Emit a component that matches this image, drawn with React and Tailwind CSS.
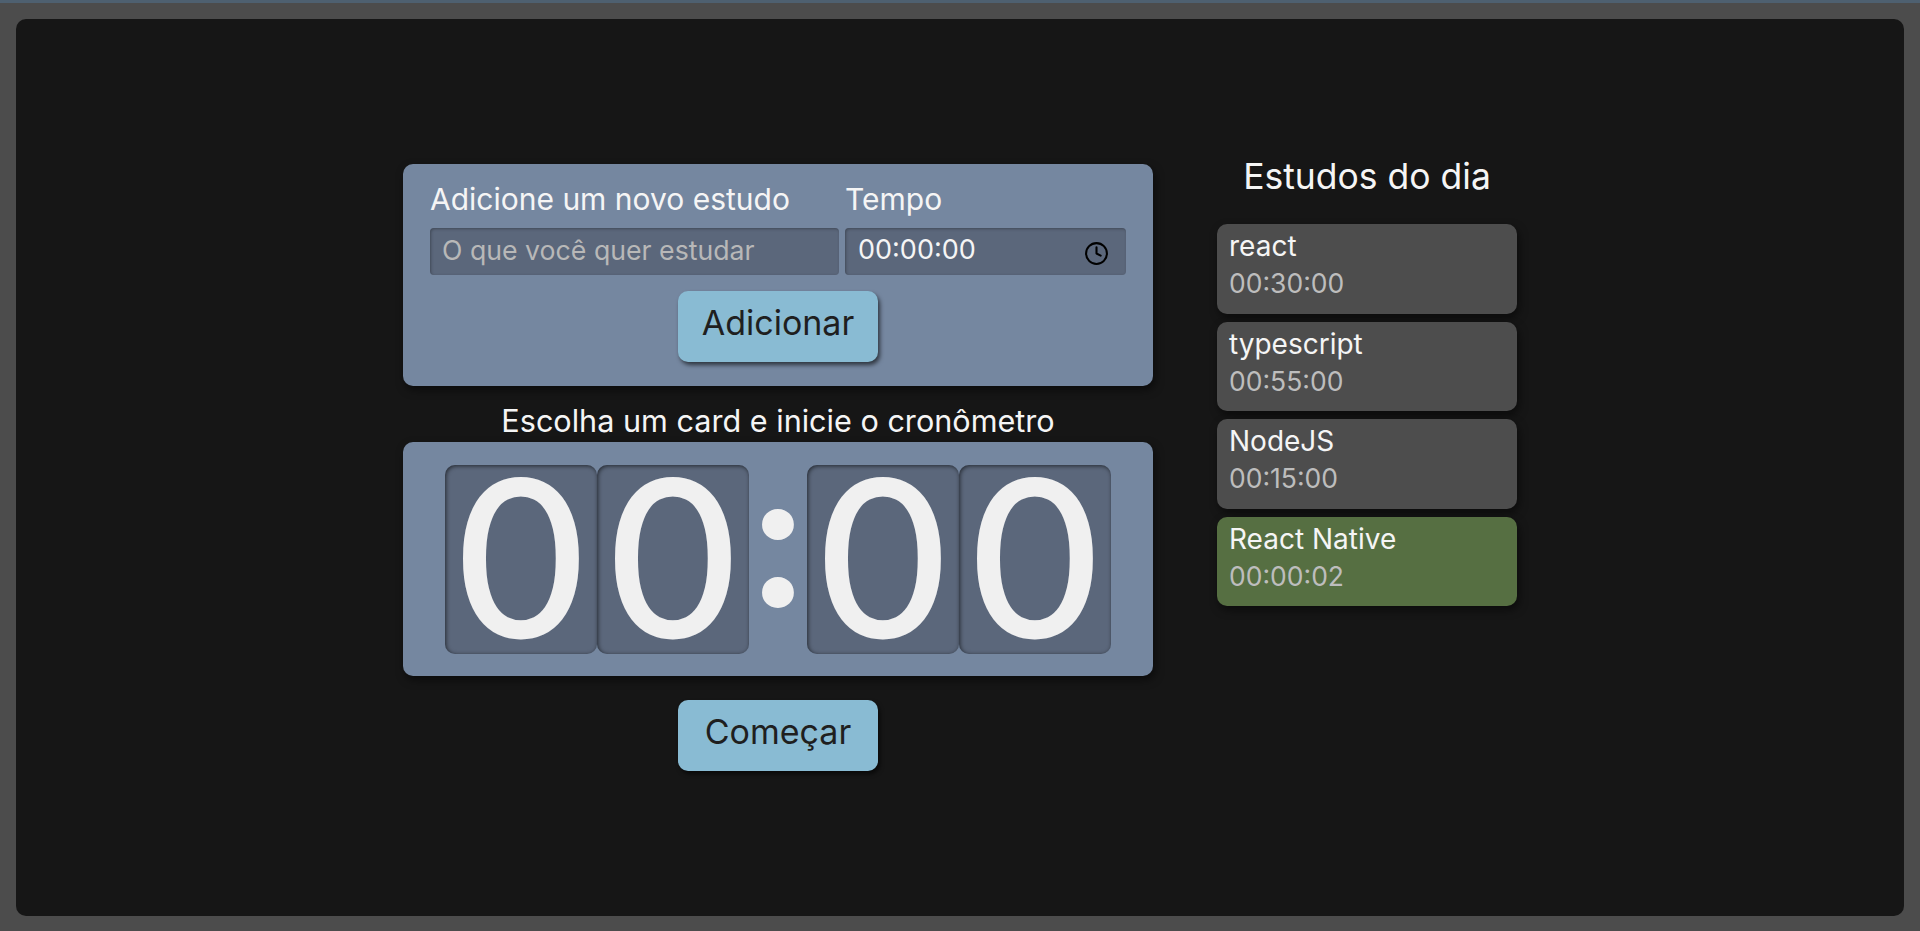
import React from 'react';
import { Clock } from 'lucide-react';

const studies = [
    { name: 'react', time: '00:30:00' },
    { name: 'typescript', time: '00:55:00' },
    { name: 'NodeJS', time: '00:15:00' },
    { name: 'React Native', time: '00:00:02', active: true },
];

function Digit({ value }) {
    return (
        <span className="w-[152px] h-[189px] flex items-center justify-center bg-[#5b677b] rounded-[10px] shadow-[inset_1px_1px_4px_rgba(0,0,0,0.6)] font-['Lato',sans-serif] text-[217px] leading-none pb-[14px] text-[#f0f0f0] [-webkit-text-stroke:3px_#f0f0f0]">
            {value}
        </span>
    );
}

function App() {
    return (
        <div className="h-[931px] bg-[#4c4c4c] border-t-[3px] border-[#4e6070] pt-4 pb-[15px] px-4 font-['Inter',sans-serif]">
            <div className="h-full bg-[#161616] rounded-[10px] flex justify-center gap-16 pt-[145px]">
                <div className="w-[750px] flex flex-col items-center">
                    <form className="w-full h-[222px] bg-[#7587a0] rounded-[10px] shadow-[2px_4px_8px_rgba(0,0,0,0.5)] pt-[17px] px-[27px]">
                        <div className="flex gap-[6px]">
                            <div className="w-[409px] flex flex-col">
                                <label className="text-[30px] leading-[36px] text-[#f5f5f5] pb-[11px]">Adicione um novo estudo</label>
                                <input
                                    placeholder="O que você quer estudar"
                                    className="h-[47px] bg-[#5b677b] rounded-[4px] px-3 pb-[3px] text-[26.7px] text-[#f5f5f5] placeholder:text-[#b8b8b8] shadow-[inset_1px_1px_3px_rgba(0,0,0,0.3)] outline-none"
                                />
                            </div>
                            <div className="w-[281px] flex flex-col">
                                <label className="text-[30px] leading-[36px] text-[#f5f5f5] pb-[11px]">Tempo</label>
                                <div className="h-[47px] bg-[#5b677b] rounded-[4px] pl-[13px] pr-[17px] pb-[2px] flex items-center justify-between shadow-[inset_1px_1px_3px_rgba(0,0,0,0.3)]">
                                    <span className="text-[27px] text-[#f5f5f5]">00:00:00</span>
                                    <Clock className="w-[25px] h-[25px] mt-[6px] text-black" />
                                </div>
                            </div>
                        </div>
                        <div className="flex justify-center mt-4">
                            <button type="button" className="w-[200px] h-[71px] bg-[#89bbd3] rounded-[10px] text-[34px] text-[#1f1f1f] pb-[8px] shadow-[2px_3px_4px_rgba(0,0,0,0.6)]">
                                Adicionar
                            </button>
                        </div>
                    </form>
                    <h2 className="h-14 flex items-center justify-center text-[30.6px] text-[#f5f5f5] pt-[14px]">Escolha um card e inicie o cronômetro</h2>
                    <div className="w-full h-[234px] bg-[#7587a0] rounded-[10px] shadow-[2px_4px_8px_rgba(0,0,0,0.5)] flex items-center justify-center">
                        <Digit value="0" />
                        <Digit value="0" />
                        <span className="w-[58px] text-center font-['Lato',sans-serif] font-black text-[195px] leading-none pb-[54px] text-[#f0f0f0]">:</span>
                        <Digit value="0" />
                        <Digit value="0" />
                    </div>
                    <button type="button" className="mt-6 w-[200px] h-[71px] bg-[#89bbd3] rounded-[10px] text-[34px] text-[#1f1f1f] pb-[8px] shadow-[2px_3px_4px_rgba(0,0,0,0.6)]">
                        Começar
                    </button>
                </div>
                <aside className="w-[300px]">
                    <h2 className="h-[60px] text-center text-[35.5px] leading-[26px] text-[#f5f5f5]">Estudos do dia</h2>
                    <ul className="flex flex-col gap-2">
                        {studies.map((study) => (
                            <li
                                key={study.name}
                                className={`h-[89.5px] rounded-[10px] px-3 pt-1 shadow-[2px_4px_8px_rgba(0,0,0,0.5)] ${study.active ? 'bg-[#566f42]' : 'bg-[#4d4d4d]'}`}
                            >
                                <h3 className="text-[28px] leading-[37px] text-[#f5f5f5]">{study.name}</h3>
                                <span className="text-[26.5px] leading-[36px] text-[#bdbdbd]">{study.time}</span>
                            </li>
                        ))}
                    </ul>
                </aside>
            </div>
        </div>
    );
}

export default App;
